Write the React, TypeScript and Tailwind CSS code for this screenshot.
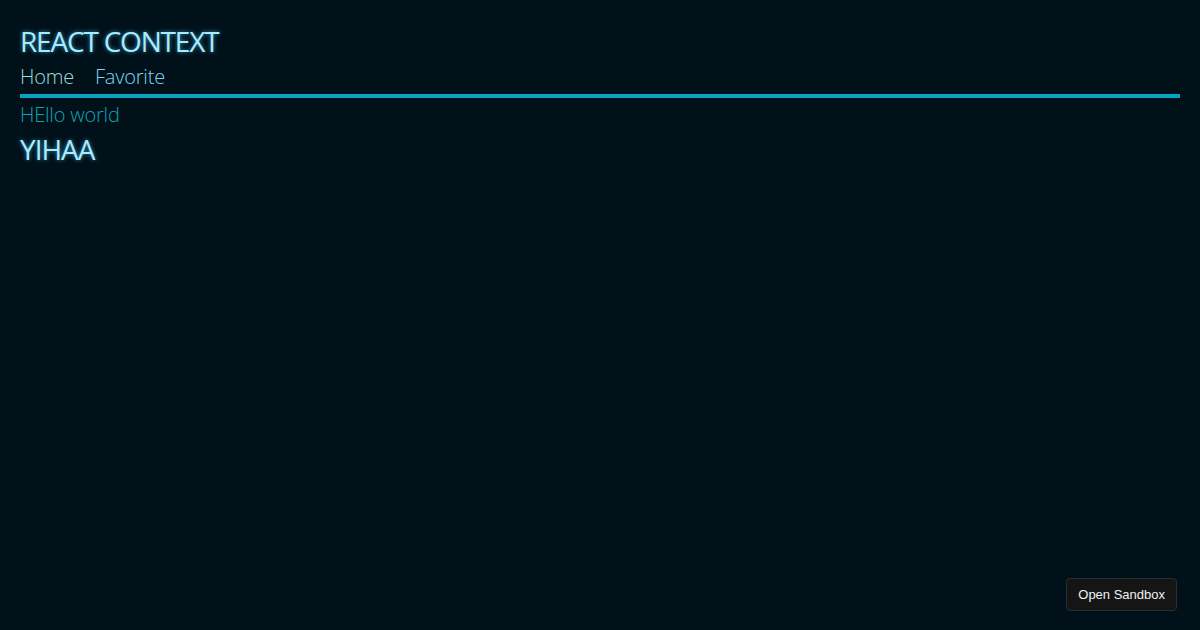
import React from 'react';

const glow = '[text-shadow:0_0_4px_rgba(80,200,255,0.7)]';

const App: React.FC = () => {
  return (
    <div className="w-[1200px] h-[630px] bg-[#00111a] font-['Open_Sans',sans-serif] relative overflow-hidden">
      <div className="px-5 pt-[22px]">
        <h1 className={`text-[28px] leading-[38px] font-normal tracking-[-1.2px] text-[#a6ecff] ${glow}`}>REACT CONTEXT</h1>
        <nav className="flex gap-[21px] mt-[4px] h-[26px] items-center text-[20px] font-light tracking-[-0.2px]">
          <span className="text-[#9fdcd9]">Home</span>
          <span className="text-[#7fd6f0]">Favorite</span>
        </nav>
        <div className="mt-[4px] h-[4px] bg-[#0aa3c2]" />
        <p className="mt-[4px] h-[26px] leading-[26px] text-[20px] font-light tracking-[-0.2px] text-[#0fa4b4]">HEllo world</p>
        <h2 className={`mt-[5px] text-[28px] leading-[32px] tracking-[-1px] text-[#a6ecff] ${glow}`}>YIHAA</h2>
      </div>
      <button className="absolute right-[23px] bottom-[19px] h-[33px] px-[11px] rounded-[4px] bg-[#151515] border border-[#2e2e2e] text-[13px] text-[#f0f0f0] font-['Liberation_Sans',sans-serif]">
        Open Sandbox
      </button>
    </div>
  );
};

export default App;
